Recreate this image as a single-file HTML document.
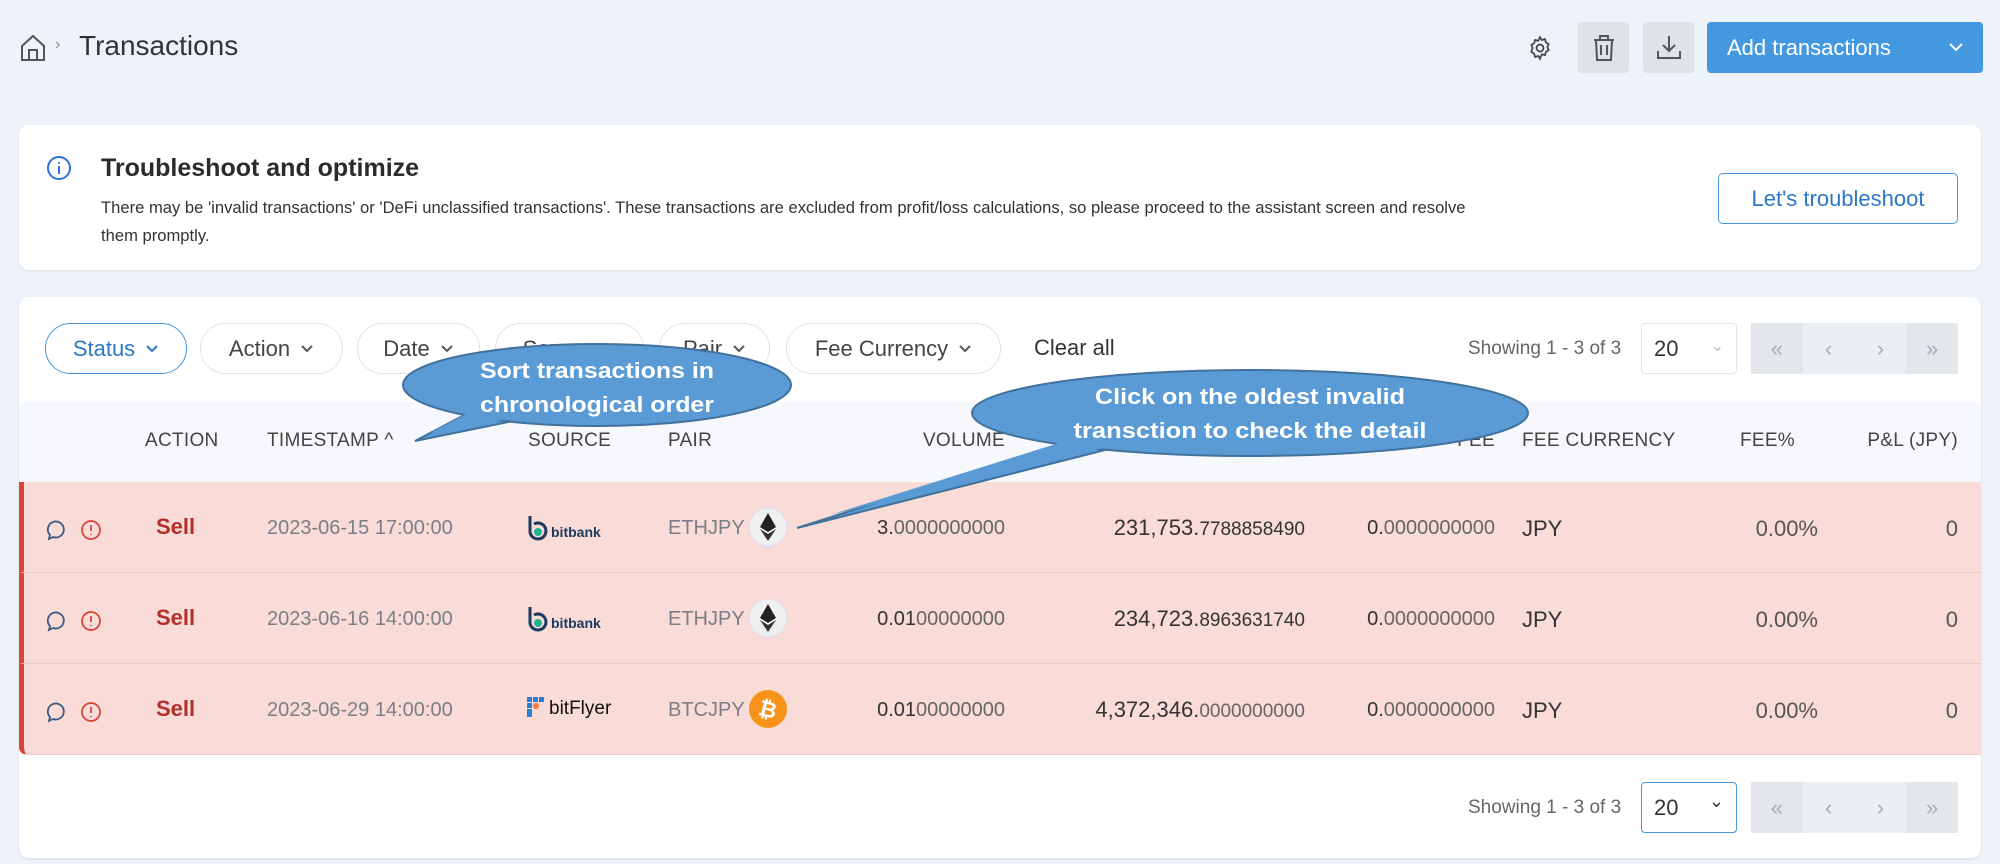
<!DOCTYPE html>
<html><head><meta charset="utf-8"><style>
*{box-sizing:border-box;margin:0;padding:0}
body{width:2000px;height:864px;background:#eef3fa;font-family:"Liberation Sans",sans-serif;position:relative;overflow:hidden;color:#222}
.a{position:absolute}
.card{position:absolute;background:#fff;border-radius:10px;box-shadow:0 1px 3px rgba(0,0,0,.08)}
.pill{position:absolute;top:323px;height:51px;border:1px solid #dfe3e8;border-radius:26px;font-size:22px;color:#444;display:flex;align-items:center;justify-content:center;gap:10px}
.pill svg{width:14px;height:14px}
.th{position:absolute;top:430px;font-size:19px;color:#444;letter-spacing:.3px}
.row{position:absolute;left:19px;width:1962px;height:91px;background:#f9dbd8;border-left:5px solid #d9453a;border-bottom:1px solid #ecc8c5}
.c{position:absolute;font-size:20px;white-space:nowrap}
.r{text-align:right}
.pg{position:absolute;height:51px;width:207px;background:#eceff2;border-radius:4px;display:flex}
.pg div{flex:1;display:flex;align-items:center;justify-content:center;color:#aab;font-size:22px}
.pg div:first-child,.pg div:last-child{background:#e3e6ea}
.sel{position:absolute;width:96px;height:51px;border:1px solid #dfe3e8;border-radius:4px;background:#fff;font-size:22px;padding:12px 12px;color:#333}
</style></head><body>

<svg class="a" style="left:20px;top:34px" width="26" height="28" viewBox="0 0 26 28" fill="none" stroke="#555" stroke-width="2"><path d="M2 12 L13 2 L24 12 V26 H2 Z"/><path d="M9 26 V16 H17 V26"/></svg>
<div class="a" style="left:55px;top:36px;font-size:16px;color:#888">›</div>
<div class="a" style="left:79px;top:30px;font-size:28px;color:#333">Transactions</div>
<svg class="a" style="left:1527px;top:35px" width="26" height="26" viewBox="0 0 24 24" fill="none" stroke="#444" stroke-width="1.6"><circle cx="12" cy="12" r="3.2"/><path d="M12 2l1.6 2.6 3-.8.8 3 2.6 1.6-1.2 2.8 1.2 2.8-2.6 1.6-.8 3-3-.8L12 22l-1.6-2.6-3 .8-.8-3L4 15.6 5.2 12 4 9.2l2.6-1.6.8-3 3 .8z"/></svg>
<div class="a" style="left:1578px;top:22px;width:51px;height:51px;background:#dfe2e6;border-radius:4px"></div>
<svg class="a" style="left:1591px;top:34px" width="26" height="28" viewBox="0 0 26 28" fill="none" stroke="#555" stroke-width="2"><path d="M3 6H23M9 6V2H17V6M5 6L6 26H20L21 6M10 11V21M16 11V21"/></svg>
<div class="a" style="left:1643px;top:22px;width:51px;height:51px;background:#dfe2e6;border-radius:4px"></div>
<svg class="a" style="left:1656px;top:34px" width="26" height="26" viewBox="0 0 26 26" fill="none" stroke="#555" stroke-width="2"><path d="M13 2V17M7 11L13 17L19 11M2 17V24H24V17"/></svg>
<div class="a" style="left:1707px;top:22px;width:276px;height:51px;background:#4398e0;border-radius:4px;color:#fff;font-size:22px;padding:13px 0 0 20px">Add transactions</div>
<svg class="a" style="left:1948px;top:41px" width="16" height="12" viewBox="0 0 16 12" fill="none" stroke="#fff" stroke-width="2"><path d="M2 3L8 9L14 3"/></svg>

<div class="card" style="left:19px;top:125px;width:1962px;height:145px"></div>
<svg class="a" style="left:46px;top:155px" width="26" height="26" viewBox="0 0 26 26" fill="none" stroke="#2e6fe0" stroke-width="2"><circle cx="13" cy="13" r="11"/><path d="M13 11V19M13 7V8.5"/></svg>
<div class="a" style="left:101px;top:154px;font-size:25px;font-weight:bold;color:#2b2b2b">Troubleshoot and optimize</div>
<div class="a" style="left:101px;top:194px;width:1600px;font-size:16.6px;line-height:28px;color:#333">There may be 'invalid transactions' or 'DeFi unclassified transactions'. These transactions are excluded from profit/loss calculations, so please proceed to the assistant screen and resolve<br>them promptly.</div>
<div class="a" style="left:1718px;top:173px;width:240px;height:51px;border:1.5px solid #4398e0;border-radius:5px;color:#2b78c8;font-size:22px;text-align:center;padding-top:12px">Let's troubleshoot</div>

<div class="card" style="left:19px;top:297px;width:1962px;height:561px"></div>
<div class="pill" style="left:45px;width:142px;border-color:#4398e0;color:#2b78c8">Status <svg viewBox="0 0 14 14" fill="none" stroke="#2b78c8" stroke-width="2"><path d="M2 4L7 9L12 4"/></svg></div>
<div class="pill" style="left:200px;width:143px">Action <svg viewBox="0 0 14 14" fill="none" stroke="#555" stroke-width="2"><path d="M2 4L7 9L12 4"/></svg></div>
<div class="pill" style="left:357px;width:123px">Date <svg viewBox="0 0 14 14" fill="none" stroke="#555" stroke-width="2"><path d="M2 4L7 9L12 4"/></svg></div>
<div class="pill" style="left:495px;width:149px">Source <svg viewBox="0 0 14 14" fill="none" stroke="#555" stroke-width="2"><path d="M2 4L7 9L12 4"/></svg></div>
<div class="pill" style="left:659px;width:111px">Pair <svg viewBox="0 0 14 14" fill="none" stroke="#555" stroke-width="2"><path d="M2 4L7 9L12 4"/></svg></div>
<div class="pill" style="left:786px;width:215px">Fee Currency <svg viewBox="0 0 14 14" fill="none" stroke="#555" stroke-width="2"><path d="M2 4L7 9L12 4"/></svg></div>
<div class="a" style="left:1034px;top:335px;font-size:22px;color:#333">Clear all</div>
<div class="a" style="left:1468px;top:338px;font-size:19px;color:#666">Showing 1 - 3 of 3</div>
<div class="sel" style="left:1641px;top:323px">20<span style="position:absolute;right:12px;top:12px;color:#bbb;font-size:16px">⌄</span></div>
<div class="pg" style="left:1751px;top:323px"><div>«</div><div>‹</div><div>›</div><div>»</div></div>

<div class="a" style="left:19px;top:402px;width:1962px;height:80px;background:#f6f8fc"></div>
<div class="th" style="left:145px">ACTION</div>
<div class="th" style="left:267px">TIMESTAMP ^</div>
<div class="th" style="left:528px">SOURCE</div>
<div class="th" style="left:668px">PAIR</div>
<div class="th" style="left:905px;width:100px;text-align:right">VOLUME</div>
<div class="th" style="left:1395px;width:100px;text-align:right">FEE</div>
<div class="th" style="left:1522px">FEE CURRENCY</div>
<div class="th" style="left:1695px;width:100px;text-align:right">FEE%</div>
<div class="th" style="left:1808px;width:150px;text-align:right">P&amp;L (JPY)</div>

<div class="row" style="top:482px"></div>
<div class="row" style="top:573px"></div>
<div class="row" style="top:664px;border-bottom-left-radius:8px"></div>

<svg class="a" style="left:45px;top:520px" width="20" height="22" viewBox="0 0 20 22" fill="none" stroke="#3d5a80" stroke-width="1.8"><path d="M4 19L5 15A8 8 0 1 1 8 17Z"/></svg>
<svg class="a" style="left:80px;top:519px" width="22" height="22" viewBox="0 0 22 22" fill="none" stroke="#d9453a" stroke-width="1.8"><circle cx="11" cy="11" r="9"/><path d="M11 6V12M11 15V16"/></svg>
<div class="c" style="left:156px;top:514px;font-size:22px;font-weight:bold;color:#b3302a">Sell</div>
<div class="c" style="left:267px;top:517px;color:#7a7f87">2023-06-15 17:00:00</div>
<div class="c" style="left:668px;top:517px;color:#7a7f87">ETHJPY</div>
<div class="c r" style="left:805px;width:200px;top:517px;color:#333">3.<span style="color:#666">0000000000</span></div>
<div class="c r" style="left:1005px;width:300px;top:515px;font-size:22px;color:#333">231,753.<span style="font-size:19px">7788858490</span></div>
<div class="c r" style="left:1295px;width:200px;top:517px;color:#333">0.<span style="color:#666">0000000000</span></div>
<div class="c" style="left:1522px;top:516px;color:#333;font-size:22px">JPY</div>
<div class="c r" style="left:1718px;width:100px;top:516px;color:#555;font-size:22px">0.00%</div>
<div class="c r" style="left:1858px;width:100px;top:516px;color:#555;font-size:22px">0</div>

<svg class="a" style="left:45px;top:611px" width="20" height="22" viewBox="0 0 20 22" fill="none" stroke="#3d5a80" stroke-width="1.8"><path d="M4 19L5 15A8 8 0 1 1 8 17Z"/></svg>
<svg class="a" style="left:80px;top:610px" width="22" height="22" viewBox="0 0 22 22" fill="none" stroke="#d9453a" stroke-width="1.8"><circle cx="11" cy="11" r="9"/><path d="M11 6V12M11 15V16"/></svg>
<div class="c" style="left:156px;top:605px;font-size:22px;font-weight:bold;color:#b3302a">Sell</div>
<div class="c" style="left:267px;top:608px;color:#7a7f87">2023-06-16 14:00:00</div>
<div class="c" style="left:668px;top:608px;color:#7a7f87">ETHJPY</div>
<div class="c r" style="left:805px;width:200px;top:608px;color:#333">0.01<span style="color:#666">00000000</span></div>
<div class="c r" style="left:1005px;width:300px;top:606px;font-size:22px;color:#333">234,723.<span style="font-size:19px">8963631740</span></div>
<div class="c r" style="left:1295px;width:200px;top:608px;color:#333">0.<span style="color:#666">0000000000</span></div>
<div class="c" style="left:1522px;top:607px;color:#333;font-size:22px">JPY</div>
<div class="c r" style="left:1718px;width:100px;top:607px;color:#555;font-size:22px">0.00%</div>
<div class="c r" style="left:1858px;width:100px;top:607px;color:#555;font-size:22px">0</div>

<svg class="a" style="left:45px;top:702px" width="20" height="22" viewBox="0 0 20 22" fill="none" stroke="#3d5a80" stroke-width="1.8"><path d="M4 19L5 15A8 8 0 1 1 8 17Z"/></svg>
<svg class="a" style="left:80px;top:701px" width="22" height="22" viewBox="0 0 22 22" fill="none" stroke="#d9453a" stroke-width="1.8"><circle cx="11" cy="11" r="9"/><path d="M11 6V12M11 15V16"/></svg>
<div class="c" style="left:156px;top:696px;font-size:22px;font-weight:bold;color:#b3302a">Sell</div>
<div class="c" style="left:267px;top:699px;color:#7a7f87">2023-06-29 14:00:00</div>
<div class="c" style="left:668px;top:699px;color:#7a7f87">BTCJPY</div>
<div class="c r" style="left:805px;width:200px;top:699px;color:#333">0.01<span style="color:#666">00000000</span></div>
<div class="c r" style="left:1005px;width:300px;top:697px;font-size:22px;color:#333">4,372,346.<span style="font-size:19px;color:#666">0000000000</span></div>
<div class="c r" style="left:1295px;width:200px;top:699px;color:#333">0.<span style="color:#666">0000000000</span></div>
<div class="c" style="left:1522px;top:698px;color:#333;font-size:22px">JPY</div>
<div class="c r" style="left:1718px;width:100px;top:698px;color:#555;font-size:22px">0.00%</div>
<div class="c r" style="left:1858px;width:100px;top:698px;color:#555;font-size:22px">0</div>

<svg class="a" style="left:527px;top:514px" width="90" height="28" viewBox="0 0 90 28"><path d="M3 2V18A8 8 0 1 0 7 10" fill="none" stroke="#1c3a5e" stroke-width="3"/><circle cx="11" cy="18" r="4" fill="#1fb58f"/><text x="24" y="23" font-family="Liberation Sans" font-weight="bold" font-size="14" fill="#1c3a5e">bitbank</text></svg>
<svg class="a" style="left:527px;top:605px" width="90" height="28" viewBox="0 0 90 28"><path d="M3 2V18A8 8 0 1 0 7 10" fill="none" stroke="#1c3a5e" stroke-width="3"/><circle cx="11" cy="18" r="4" fill="#1fb58f"/><text x="24" y="23" font-family="Liberation Sans" font-weight="bold" font-size="14" fill="#1c3a5e">bitbank</text></svg>
<svg class="a" style="left:527px;top:694px" width="100" height="30" viewBox="0 0 100 30"><rect x="0" y="3" width="5" height="5" fill="#2a7fd4"/><rect x="6" y="3" width="5" height="5" fill="#2a7fd4"/><rect x="12" y="3" width="5" height="5" fill="#2a7fd4"/><rect x="0" y="9" width="5" height="5" fill="#2a7fd4"/><rect x="0" y="15" width="5" height="8" fill="#2a7fd4"/><circle cx="9" cy="12" r="3" fill="#f47c3c"/><text x="22" y="20" font-family="Liberation Sans" font-size="19" fill="#111">bitFlyer</text></svg>

<svg class="a" style="left:748px;top:507px" width="40" height="40" viewBox="0 0 40 40"><circle cx="20" cy="20" r="19" fill="#eef0f2" stroke="#dde" /><path d="M20 6L28 20L20 25L12 20Z" fill="#222"/><path d="M20 27L28 22L20 34L12 22Z" fill="#333"/></svg>
<svg class="a" style="left:748px;top:598px" width="40" height="40" viewBox="0 0 40 40"><circle cx="20" cy="20" r="19" fill="#eef0f2" stroke="#dde"/><path d="M20 6L28 20L20 25L12 20Z" fill="#222"/><path d="M20 27L28 22L20 34L12 22Z" fill="#333"/></svg>
<svg class="a" style="left:748px;top:689px" width="40" height="40" viewBox="0 0 40 40"><circle cx="20" cy="20" r="19" fill="#f7931a"/><text x="20" y="28" text-anchor="middle" font-family="Liberation Sans" font-weight="bold" font-size="22" fill="#fff" transform="rotate(14 20 20)">₿</text></svg>

<div class="a" style="left:1468px;top:797px;font-size:19px;color:#666">Showing 1 - 3 of 3</div>
<div class="sel" style="left:1641px;top:782px;border:1.5px solid #4398e0">20<span style="position:absolute;right:12px;top:8px;color:#333;font-size:18px">⌄</span></div>
<div class="pg" style="left:1751px;top:782px"><div>«</div><div>‹</div><div>›</div><div>»</div></div>

<svg class="a" style="left:0;top:0" width="2000" height="864">
<g fill="#5b9bd5" stroke="#41719c" stroke-width="2">
<polygon points="528,418 470,412 415,441"/>
<ellipse cx="597" cy="385" rx="194" ry="41"/>
<polygon points="526,416 472,411 430,433" stroke="none"/>
<polygon points="1105,450 1060,444 797,528"/>
<ellipse cx="1250" cy="413" rx="278" ry="43"/>
<polygon points="1103,448 1062,442 830,515" stroke="none"/>
</g>
<text x="597" y="378" text-anchor="middle" font-family="Liberation Sans" font-weight="bold" font-size="22" textLength="234" lengthAdjust="spacingAndGlyphs" fill="#fff">Sort transactions in</text>
<text x="597" y="412" text-anchor="middle" font-family="Liberation Sans" font-weight="bold" font-size="22" textLength="234" lengthAdjust="spacingAndGlyphs" fill="#fff">chronological order</text>
<text x="1250" y="404" text-anchor="middle" font-family="Liberation Sans" font-weight="bold" font-size="22" textLength="310" lengthAdjust="spacingAndGlyphs" fill="#fff">Click on the oldest invalid</text>
<text x="1250" y="438" text-anchor="middle" font-family="Liberation Sans" font-weight="bold" font-size="22" textLength="353" lengthAdjust="spacingAndGlyphs" fill="#fff">transction to check the detail</text>
</svg>
</body></html>
